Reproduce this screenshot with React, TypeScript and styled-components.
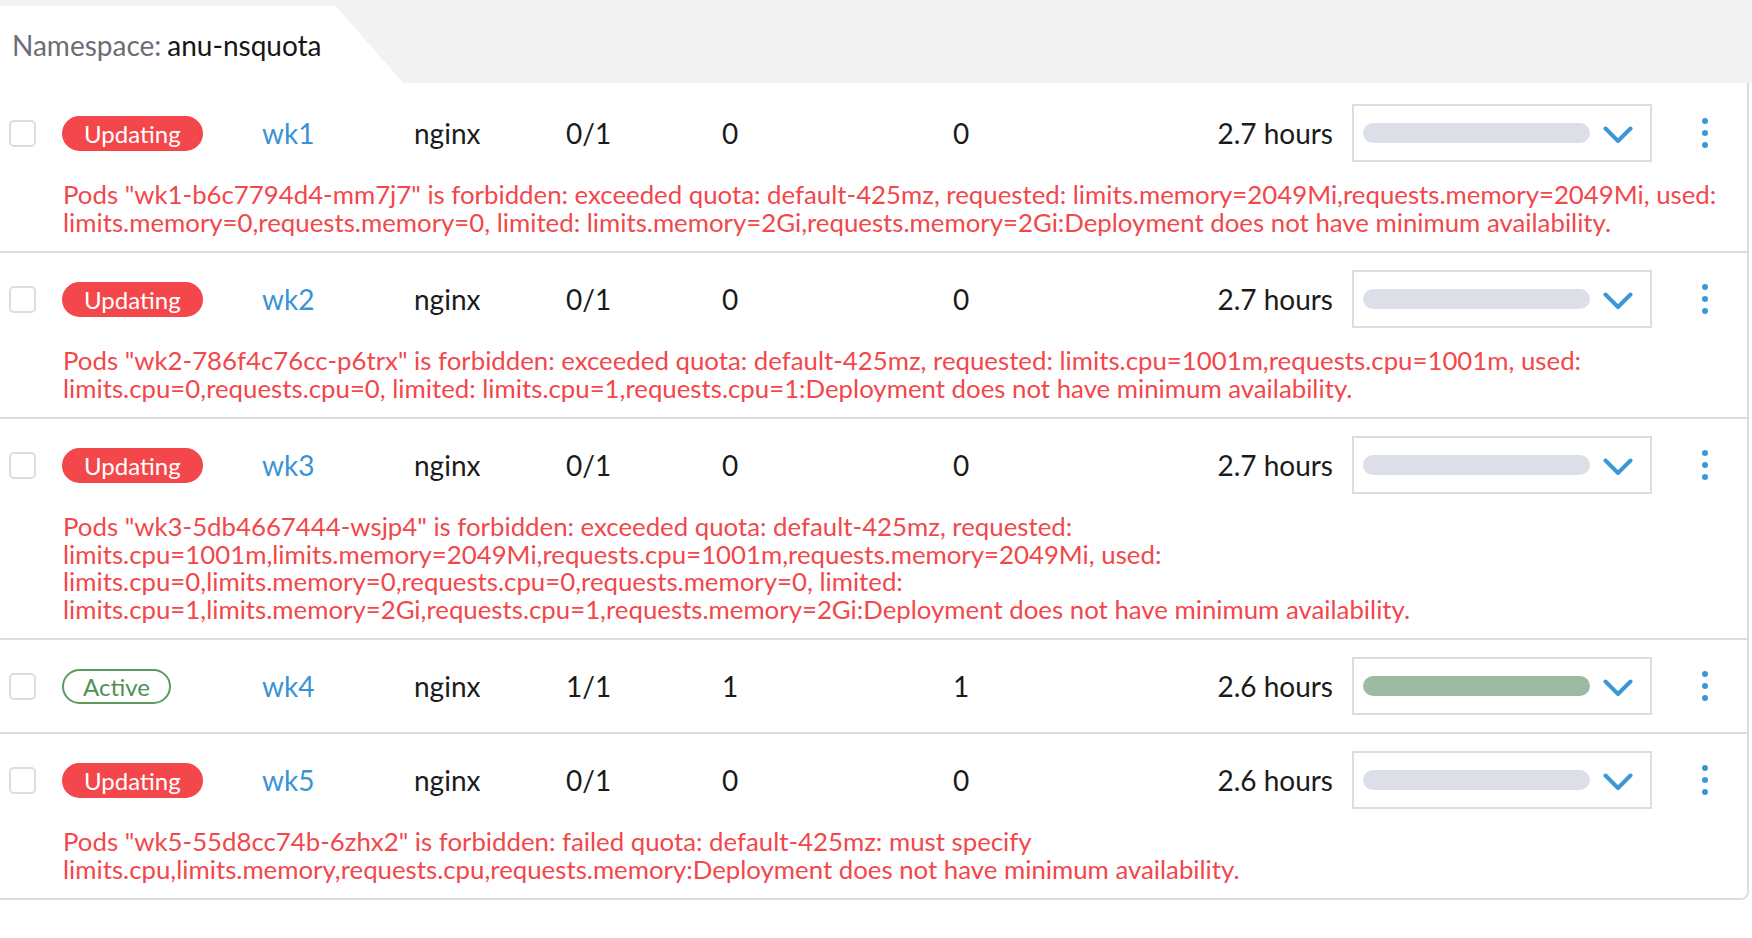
import styled, { createGlobalStyle } from "styled-components"

const GlobalStyle = createGlobalStyle`
    body {
        margin: 0;
        background: #ffffff;
        font-family: Lato, "Open Sans", sans-serif;
    }
`

type Status = "Updating" | "Active"

interface Workload {
    status: Status
    name: string
    image: string
    pods: string
    ready: string
    available: string
    age: string
    error?: string
}

const workloads: Workload[] = [
    {
        status: "Updating",
        name: "wk1",
        image: "nginx",
        pods: "0/1",
        ready: "0",
        available: "0",
        age: "2.7 hours",
        error: 'Pods "wk1-b6c7794d4-mm7j7" is forbidden: exceeded quota: default-425mz, requested: limits.memory=2049Mi,requests.memory=2049Mi, used: limits.memory=0,requests.memory=0, limited: limits.memory=2Gi,requests.memory=2Gi:Deployment does not have minimum availability.',
    },
    {
        status: "Updating",
        name: "wk2",
        image: "nginx",
        pods: "0/1",
        ready: "0",
        available: "0",
        age: "2.7 hours",
        error: 'Pods "wk2-786f4c76cc-p6trx" is forbidden: exceeded quota: default-425mz, requested: limits.cpu=1001m,requests.cpu=1001m, used: limits.cpu=0,requests.cpu=0, limited: limits.cpu=1,requests.cpu=1:Deployment does not have minimum availability.',
    },
    {
        status: "Updating",
        name: "wk3",
        image: "nginx",
        pods: "0/1",
        ready: "0",
        available: "0",
        age: "2.7 hours",
        error: 'Pods "wk3-5db4667444-wsjp4" is forbidden: exceeded quota: default-425mz, requested: limits.cpu=1001m,limits.memory=2049Mi,requests.cpu=1001m,requests.memory=2049Mi, used: limits.cpu=0,limits.memory=0,requests.cpu=0,requests.memory=0, limited: limits.cpu=1,limits.memory=2Gi,requests.cpu=1,requests.memory=2Gi:Deployment does not have minimum availability.',
    },
    {
        status: "Active",
        name: "wk4",
        image: "nginx",
        pods: "1/1",
        ready: "1",
        available: "1",
        age: "2.6 hours",
    },
    {
        status: "Updating",
        name: "wk5",
        image: "nginx",
        pods: "0/1",
        ready: "0",
        available: "0",
        age: "2.6 hours",
        error: 'Pods "wk5-55d8cc74b-6zhx2" is forbidden: failed quota: default-425mz: must specify limits.cpu,limits.memory,requests.cpu,requests.memory:Deployment does not have minimum availability.',
    },
]

function Chevron() {
    return (
        <ChevronIcon width="30" height="18" viewBox="0 0 30 18" fill="none">
            <polyline
                points="2.5,2.5 15,15 27.5,2.5"
                stroke="#3b97d6"
                strokeWidth="4"
                strokeLinecap="round"
                strokeLinejoin="round"
            />
        </ChevronIcon>
    )
}

function App() {
    return (
        <>
            <GlobalStyle />
            <Header>
                <Tab>
                    <TabLabel>Namespace:</TabLabel>
                    <TabValue>anu-nsquota</TabValue>
                </Tab>
            </Header>

            <Table>
                {workloads.map((w) => (
                    <Row key={w.name}>
                        <Main>
                            <Checkbox />
                            <Cell>
                                <Badge $status={w.status}>{w.status}</Badge>
                            </Cell>
                            <Link>{w.name}</Link>
                            <Cell>{w.image}</Cell>
                            <Cell>{w.pods}</Cell>
                            <Cell>{w.ready}</Cell>
                            <Cell>{w.available}</Cell>
                            <Age>{w.age}</Age>
                            <Select>
                                <Progress $active={w.status === "Active"} />
                                <Chevron />
                            </Select>
                            <Kebab>
                                <Dot />
                                <Dot />
                                <Dot />
                            </Kebab>
                        </Main>
                        {w.error && <ErrorText>{w.error}</ErrorText>}
                    </Row>
                ))}
            </Table>
        </>
    )
}

export default App

const Header = styled.div`
    height: 83px;
    padding-top: 6px;
    box-sizing: border-box;
    background: #f2f2f2;
`

const Tab = styled.div`
    width: 403px;
    height: 77px;
    padding-left: 12px;
    box-sizing: border-box;
    display: flex;
    align-items: center;
    gap: 6px;
    background: #ffffff;
    clip-path: polygon(0 0, 336px 0, 403px 100%, 0 100%);
    font-size: 28px;
`

const TabLabel = styled.span`
    color: #6c6d76;
`

const TabValue = styled.span`
    color: #161616;
`

const Table = styled.div`
    width: 1749px;
    padding-top: 4px;
    box-sizing: border-box;
    border-right: 2px solid #d9dde7;
    border-bottom: 2px solid #d9dde7;
    border-bottom-right-radius: 8px;
`

const Row = styled.div`
    padding: 17px 0;
    border-bottom: 2px solid #dadde6;

    &:last-child {
        border-bottom: none;
    }
`

const Main = styled.div`
    height: 58px;
    padding-left: 9px;
    display: grid;
    grid-template-columns: 53px 200px 152px 152px 156px 231px 150px 249px 300px 1fr;
    align-items: center;
    font-size: 28px;
    color: #1b1b1b;
`

const Checkbox = styled.div`
    width: 27px;
    height: 27px;
    box-sizing: border-box;
    border: 2px solid #dadde6;
    border-radius: 5px;
    background: #ffffff;
`

const Cell = styled.div`
    display: flex;
    align-items: center;
`

const Badge = styled.span<{ $status: Status }>`
    height: 35px;
    padding: 0 ${(p) => (p.$status === "Active" ? "19px" : "20px")};
    box-sizing: border-box;
    display: inline-flex;
    align-items: center;
    border-radius: 18px;
    font-size: 24px;
    border: 2px solid ${(p) => (p.$status === "Active" ? "#5c9a5f" : "#f4474b")};
    background: ${(p) => (p.$status === "Active" ? "#ffffff" : "#f4474b")};
    color: ${(p) => (p.$status === "Active" ? "#4f9153" : "#ffffff")};
`

const Link = styled.div`
    color: #3a93d4;
    cursor: pointer;
`

const Age = styled.div`
    text-align: right;
    padding-right: 19px;
`

const Select = styled.div`
    width: 300px;
    height: 58px;
    box-sizing: border-box;
    padding: 0 17px 0 9px;
    display: flex;
    align-items: center;
    justify-content: space-between;
    border: 2px solid #d9dde7;
    background: #ffffff;
`

const Progress = styled.div<{ $active: boolean }>`
    width: 227px;
    height: 20px;
    border-radius: 10px;
    background: ${(p) => (p.$active ? "#9dbba3" : "#dcdfe8")};
`

const ChevronIcon = styled.svg`
    margin-top: 4px;
`

const Kebab = styled.div`
    padding-left: 50px;
    display: flex;
    flex-direction: column;
    gap: 6px;
    cursor: pointer;
`

const Dot = styled.span`
    width: 6px;
    height: 6px;
    border-radius: 50%;
    background: #3b97d6;
`

const ErrorText = styled.div`
    margin: 19px 0 -2px 0;
    padding: 0 14px 0 63px;
    font-size: 25.8px;
    line-height: 27.5px;
    color: #f2474b;
`
